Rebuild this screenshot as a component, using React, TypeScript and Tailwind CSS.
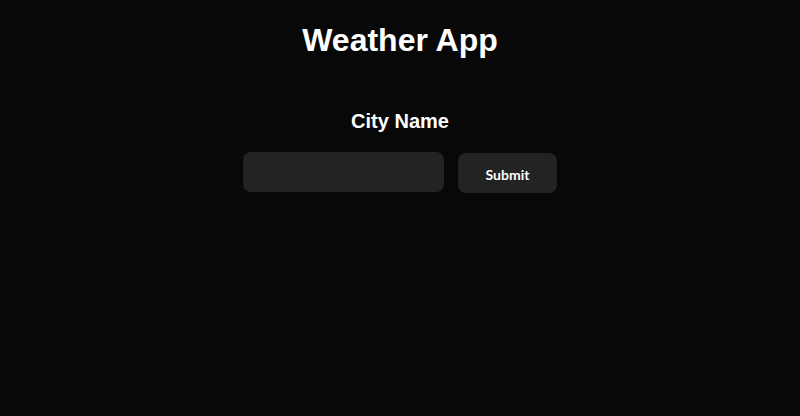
import React from "react";

export default function App() {
    return (
        <div className="min-h-[416px] w-full bg-[#080808] text-white flex flex-col items-center font-['Liberation_Sans',Arial,sans-serif]">
            <h1 className="mt-[20px] text-[32px] leading-[40px] font-bold">
                Weather App
            </h1>
            <form
                className="mt-[48px] flex flex-col items-center"
                onSubmit={(e) => e.preventDefault()}
            >
                <label className="text-[20px] leading-[26px] font-bold">
                    City Name
                </label>
                <div className="mt-[18px] flex items-start gap-[14px]">
                    <input
                        type="text"
                        className="w-[201px] h-[40px] rounded-[8px] bg-[#232323] px-3 text-white outline-none"
                    />
                    <button
                        type="submit"
                        className="mt-px w-[99px] h-[40px] pt-[2px] rounded-[8px] bg-[#232323] text-[14px] font-bold font-['Lato',sans-serif]"
                    >
                        Submit
                    </button>
                </div>
            </form>
        </div>
    );
}
